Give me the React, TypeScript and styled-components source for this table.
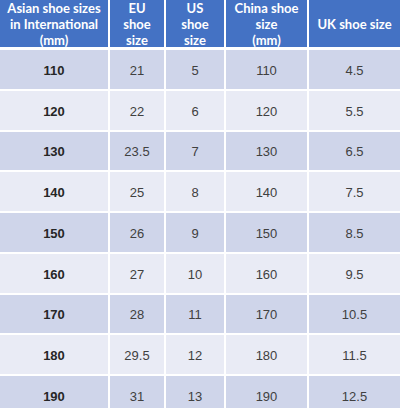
import React from "react";
import styled, { createGlobalStyle } from "styled-components";

const Global = createGlobalStyle`
  html, body { margin: 0; padding: 0; background: #ffffff; }
  #root { width: 400px; height: 408px; overflow: hidden; }
`;

const Table = styled.div`
  display: grid;
  grid-template-columns: 108px 54px 58px 81px 91px;
  grid-template-rows: 48px;
  grid-auto-rows: 38.75px;
  column-gap: 2px;
  row-gap: 2px;
  width: 400px;
  background: #ffffff;
`;

const HeaderCell = styled.div`
  background: #4472c4;
  color: #ffffff;
  font-family: Lato, "Open Sans", sans-serif;
  font-weight: 700;
  font-size: 13px;
  line-height: 16px;
  text-align: center;
  display: flex;
  align-items: center;
  justify-content: center;
  margin-bottom: 1px;
`;

const Cell = styled.div<{ $band: boolean; $strong?: boolean }>`
  background: ${(p) => (p.$band ? "#cfd5ea" : "#e9ebf5")};
  color: ${(p) => (p.$strong ? "#262626" : "#404040")};
  font-family: "Liberation Sans", Arial, sans-serif;
  font-weight: ${(p) => (p.$strong ? 700 : 400)};
  font-size: 13px;
  display: flex;
  align-items: center;
  justify-content: center;
  padding-top: 2px;
  box-sizing: border-box;
`;

const headers: React.ReactNode[] = [
  <>Asian shoe sizes<br />in International<br />(mm)</>,
  <>EU<br />shoe<br />size</>,
  <>US<br />shoe<br />size</>,
  <>China shoe<br />size<br />(mm)</>,
  <>UK shoe size</>,
];

const rows: string[][] = [
  ["110", "21", "5", "110", "4.5"],
  ["120", "22", "6", "120", "5.5"],
  ["130", "23.5", "7", "130", "6.5"],
  ["140", "25", "8", "140", "7.5"],
  ["150", "26", "9", "150", "8.5"],
  ["160", "27", "10", "160", "9.5"],
  ["170", "28", "11", "170", "10.5"],
  ["180", "29.5", "12", "180", "11.5"],
  ["190", "31", "13", "190", "12.5"],
];

export default function App() {
  return (
    <>
      <Global />
      <Table>
        {headers.map((h, i) => (
          <HeaderCell key={`h${i}`}>{h}</HeaderCell>
        ))}
        {rows.map((r, ri) =>
          r.map((v, ci) => (
            <Cell key={`${ri}-${ci}`} $band={ri % 2 === 0} $strong={ci === 0}>
              {v}
            </Cell>
          ))
        )}
      </Table>
    </>
  );
}
